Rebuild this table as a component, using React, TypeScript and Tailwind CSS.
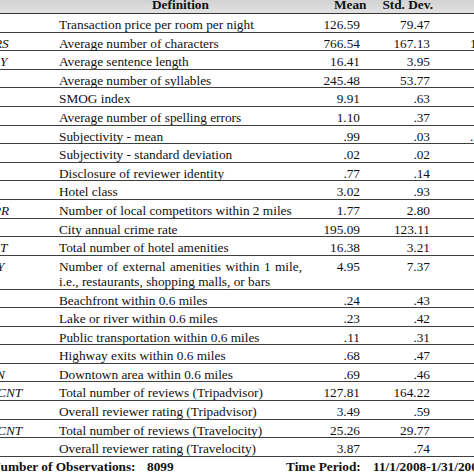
type Row = {
  v?: string;
  vOff?: string;
  d: string;
  m: string;
  s: string;
  x?: string;
};

const rows: Row[] = [
  { d: 'Transaction price per room per night', m: '126.59', s: '79.47' },
  { v: 'RS', vOff: '-ml-[6px]', d: 'Average number of characters', m: '766.54', s: '167.13', x: '1' },
  { v: 'Y', vOff: 'ml-[0px]', d: 'Average sentence length', m: '16.41', s: '3.95' },
  { d: 'Average number of syllables', m: '245.48', s: '53.77' },
  { d: 'SMOG index', m: '9.91', s: '.63' },
  { d: 'Average number of spelling errors', m: '1.10', s: '.37' },
  { d: 'Subjectivity - mean', m: '.99', s: '.03', x: '.' },
  { d: 'Subjectivity - standard deviation', m: '.02', s: '.02' },
  { d: 'Disclosure of reviewer identity', m: '.77', s: '.14' },
  { d: 'Hotel class', m: '3.02', s: '.93' },
  { v: 'PR', vOff: '-ml-[7px]', d: 'Number of local competitors within 2 miles', m: '1.77', s: '2.80' },
  { d: 'City annual crime rate', m: '195.09', s: '123.11' },
  { v: 'T', vOff: 'ml-[0px]', d: 'Total number of hotel amenities', m: '16.38', s: '3.21' },
];

const rowsAfter: Row[] = [
  { d: 'Beachfront within 0.6 miles', m: '.24', s: '.43' },
  { d: 'Lake or river within 0.6 miles', m: '.23', s: '.42' },
  { d: 'Public transportation within 0.6 miles', m: '.11', s: '.31' },
  { d: 'Highway exits within 0.6 miles', m: '.68', s: '.47' },
  { v: 'N', vOff: '-ml-[4px]', d: 'Downtown area within 0.6 miles', m: '.69', s: '.46' },
  { v: 'RCNT', vOff: '-ml-[11px]', d: 'Total number of reviews (Tripadvisor)', m: '127.81', s: '164.22' },
  { d: 'Overall reviewer rating (Tripadvisor)', m: '3.49', s: '.59' },
  { v: 'VCNT', vOff: '-ml-[11px]', d: 'Total number of reviews (Travelocity)', m: '25.26', s: '29.77' },
  { d: 'Overall reviewer rating (Travelocity)', m: '3.87', s: '.74' },
];

function TableRow({ row }: { row: Row }) {
  return (
    <div className="flex h-[18.6px] items-start border-b border-[#3f3f3f] pt-[3px]">
      <div className="w-[59px] overflow-hidden whitespace-nowrap italic">
        {row.v && <span className={`block ${row.vOff}`}>{row.v}</span>}
      </div>
      <div className="w-[250px] whitespace-nowrap">{row.d}</div>
      <div className="w-[51px] text-right">{row.m}</div>
      <div className="w-[70px] text-right">{row.s}</div>
      <div className="flex-1 whitespace-nowrap pl-[40px]">{row.x}</div>
    </div>
  );
}

export default function App() {
  return (
    <div className="h-[474px] w-[474px] overflow-hidden bg-white text-[13.3px] leading-[15px] text-[#111] [font-family:'Liberation_Serif','Times_New_Roman',serif]">
      <div className="-mt-[4px] w-[520px]">
        {/* header */}
        <div className="flex h-[18px] items-center border-b border-[#333] bg-gradient-to-b from-[#cdcdcd] to-[#e2e2e2] font-bold">
          <div className="w-[152px]" />
          <div className="w-[182px]">Definition</div>
          <div className="w-[31px] text-right">Mean</div>
          <div className="w-[68px] text-right">Std. Dev.</div>
          <div className="pl-[41px]">Min.</div>
        </div>

        {rows.map((r, i) => (
          <TableRow key={i} row={r} />
        ))}

        {/* two-line row */}
        <div className="flex h-[33.8px] items-start border-b border-[#3f3f3f] pt-[3px]">
          <div className="w-[59px] overflow-hidden whitespace-nowrap italic">
            <span className="-ml-[3px] block">Y</span>
          </div>
          <div className="w-[250px]">
            <div className="w-[243px] whitespace-nowrap text-justify [text-align-last:justify]">
              Number of external amenities within 1 mile,
            </div>
            <div className="whitespace-nowrap">i.e., restaurants, shopping malls, or bars</div>
          </div>
          <div className="w-[51px] text-right">4.95</div>
          <div className="w-[70px] text-right">7.37</div>
          <div className="flex-1" />
        </div>

        {rowsAfter.map((r, i) => (
          <TableRow key={i} row={r} />
        ))}

        {/* footer */}
        <div className="flex h-[18px] items-center whitespace-nowrap pt-[2px] font-bold">
          <div className="-ml-[9px] w-[156px]">Number of Observations:</div>
          <div className="w-[139px]">8099</div>
          <div className="w-[87px]">Time Period:</div>
          <div>11/1/2008-1/31/2009</div>
        </div>
      </div>
    </div>
  );
}
